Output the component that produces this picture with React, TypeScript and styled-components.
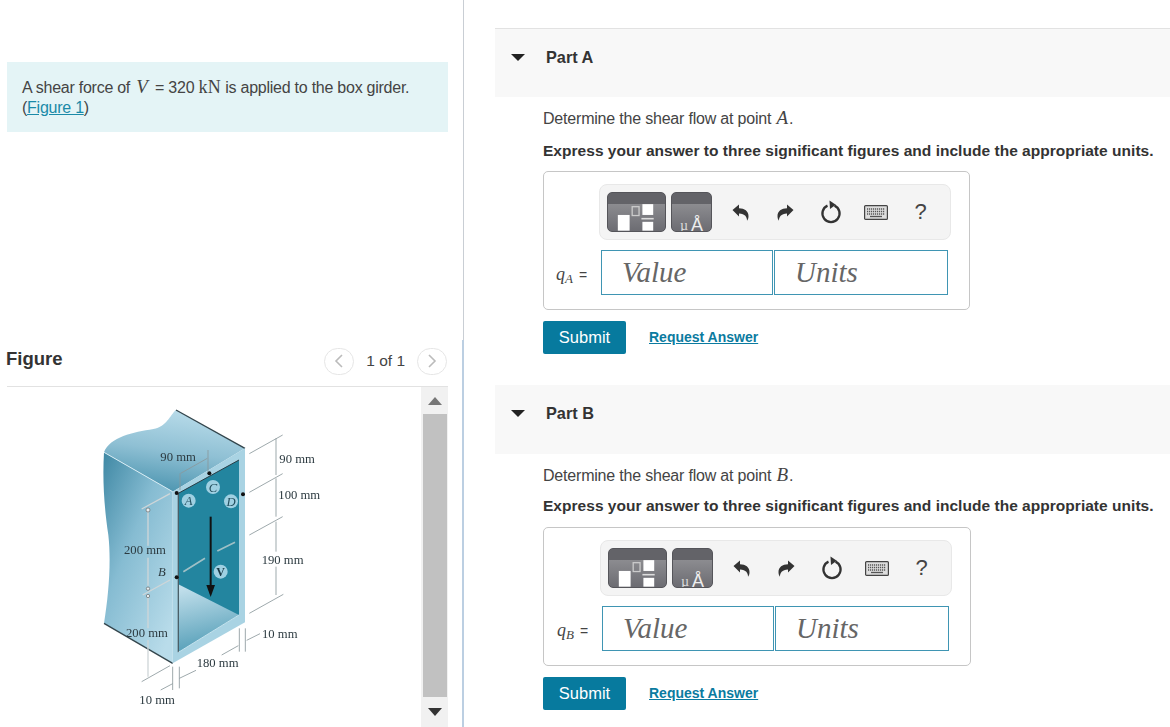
import React from "react";
import styled, { createGlobalStyle } from "styled-components";

const Global = createGlobalStyle`
  html, body { margin: 0; padding: 0; background: #fff; height: 727px; overflow: hidden; }
  body { font-family: "Liberation Sans", Arial, sans-serif; color: #333; }
`;

const Page = styled.div`
  display: flex;
  width: 1170px;
  height: 727px;
  overflow: hidden;
`;

const LeftColumn = styled.div`
  width: 462px;
  height: 727px;
  flex: none;
  padding: 62px 14px 0 7px;
  box-sizing: border-box;
  display: flex;
  flex-direction: column;
`;

const Divider = styled.div`
  width: 2px;
  height: 727px;
  flex: none;
  background:
    linear-gradient(#c9ced4, #c9ced4) right top / 1px 340px no-repeat,
    linear-gradient(#bccfe2, #bccfe2) left 340px / 2px 387px no-repeat;
`;

const Intro = styled.div`
  height: 70px;
  box-sizing: border-box;
  background: #e4f4f6;
  padding: 16px 15px 0 15px;
  font-size: 16px;
  line-height: 20px;
  letter-spacing: -0.25px;
  color: #444;
`;

const MathItalic = styled.span`
  font-family: "Liberation Serif", serif;
  font-style: italic;
  letter-spacing: 0;
  font-size: 19px;
  line-height: 0;
  margin: 0 3px 0 2px;
`;

const MathRoman = styled.span`
  font-family: "Liberation Serif", serif;
  letter-spacing: 0.3px;
  font-size: 18px;
  line-height: 0;
`;

const PromptPoint = styled.span`
  font-family: "Liberation Serif", serif;
  font-style: italic;
  letter-spacing: 0;
  font-size: 19px;
  line-height: 0;
  margin: 0 1px 0 1px;
`;

const FigureLink = styled.a`
  color: #1a8aa8;
  text-decoration: underline;
`;

const FigureHead = styled.div`
  margin-top: 208px;
  height: 46px;
  display: flex;
  align-items: center;
  justify-content: space-between;
  border-bottom: 1px solid #e2e2e2;
`;

const FigureTitle = styled.h2`
  margin: 0 0 8px -1px;
  font-size: 18.5px;
  font-weight: bold;
  color: #333;
`;

const Pager = styled.div`
  display: flex;
  align-items: center;
  gap: 12px;
  margin: 0 1px 4px 0;
  font-size: 15.5px;
  color: #444;
`;

const PagerButton = styled.span`
  width: 30px;
  height: 27px;
  border: 1px solid #e6e6e6;
  border-radius: 15px;
  box-sizing: border-box;
  display: flex;
  align-items: center;
  justify-content: center;
`;

const FigureBody = styled.div`
  display: flex;
  flex: 1;
  min-height: 0;
`;

const FigureCanvas = styled.div`
  width: 414px;
  padding: 8px 0 0 83px;
  box-sizing: border-box;
  svg { filter: blur(0.35px); }
`;

const ScrollBar = styled.div`
  width: 27px;
  display: flex;
  flex-direction: column;
  background: #f1f1f1;
`;

const ScrollButton = styled.div`
  height: ${(p: { $h: number }) => p.$h}px;
  display: flex;
  align-items: center;
  justify-content: center;
  flex: none;
`;

const ScrollThumb = styled.div`
  flex: 1;
  background: #c1c1c1;
  margin: 0 1px 0 2px;
`;

const RightColumn = styled.div`
  flex: 1;
  min-width: 0;
  padding: 28px 0 0 31px;
`;

const PartHeader = styled.div`
  height: 69px;
  box-sizing: border-box;
  background: #f8f8f8;
  border-top: ${(p: { $line?: boolean }) => (p.$line ? "1px solid #e2e2e2" : "none")};
  display: flex;
  align-items: flex-start;
  padding: 18px 0 0 16px;
`;

const Caret = styled.span`
  width: 0;
  height: 0;
  border-left: 7px solid transparent;
  border-right: 7px solid transparent;
  border-top: 7px solid #222;
  margin: 7px 21px 0 0;
`;

const PartTitle = styled.h3`
  margin: 0;
  font-size: 16.3px;
  line-height: 20px;
  font-weight: bold;
  color: #333;
`;

const PartBody = styled.div`
  padding: 11px 0 0 48px;
  height: ${(p: { $h: number }) => p.$h}px;
  box-sizing: border-box;
`;

const Prompt = styled.p`
  margin: 0;
  font-size: 16px;
  line-height: 21px;
  letter-spacing: -0.2px;
  color: #444;
`;

const Instruction = styled.p<{ $gap: number }>`
  margin: ${(p) => p.$gap}px 0 0;
  font-size: 15.5px;
  line-height: 21px;
  font-weight: bold;
  letter-spacing: 0.03px;
  color: #333;
  white-space: nowrap;
`;

const AnswerCard = styled.div<{ $gap: number; $inset: number }>`
  margin-top: ${(p) => p.$gap}px;
  width: ${(p) => 372 + p.$inset}px;
  height: 139px;
  box-sizing: border-box;
  border: 1px solid #c6c6c6;
  border-radius: 5px;
  padding: 12px 0 0 ${(p) => p.$inset}px;
`;

const Toolbar = styled.div`
  height: 56px;
  width: 352px;
  box-sizing: border-box;
  background: #f4f4f4;
  border: 1px solid #e8e8e8;
  border-radius: 8px;
  display: flex;
  align-items: center;
  padding: 0 0 0 7px;
  gap: 5px;
`;

const TemplateButton = styled.div<{ $w: number }>`
  width: ${(p) => p.$w}px;
  height: 40px;
  border-radius: 5px;
  border: 1px solid #55555a;
  box-sizing: border-box;
  background: linear-gradient(#636368 0 11px, #8c8c90 11px, #6c6c72 100%);
  overflow: hidden;
  flex: none;
  display: flex;
`;

const ToolIcons = styled.div`
  display: flex;
  align-items: center;
  margin-left: 1px;
`;

const ToolIcon = styled.span`
  width: 45px;
  display: flex;
  justify-content: center;
  align-items: center;
`;

const HelpMark = styled.span`
  font-size: 22px;
  color: #444;
  line-height: 1;
`;

const InputRow = styled.div`
  display: flex;
  align-items: center;
  margin-top: 10px;
  margin-left: -43px;
`;

const VarLabel = styled.div`
  width: 45px;
  flex: none;
  box-sizing: border-box;
  padding: 3px 0 0 0;
  font-size: 14px;
  color: #444;
  white-space: nowrap;
`;

const VarName = styled.span`
  font-family: "Liberation Serif", serif;
  font-style: italic;
  font-size: 18px;
`;

const VarSub = styled.sub`
  font-family: "Liberation Serif", serif;
  font-style: italic;
  font-size: 13px;
  line-height: 0;
  margin-right: 6px;
`;

const MathInput = styled.div<{ $w: number }>`
  height: 45px;
  width: ${(p) => p.$w}px;
  box-sizing: border-box;
  border: 1px solid #3f95b3;
  font-family: "Liberation Serif", serif;
  font-style: italic;
  font-size: 29px;
  line-height: 42px;
  color: #666;
  padding-left: 20px;
  flex: none;
  & + & { margin-left: 1px; }
`;

const Actions = styled.div`
  margin-top: 11px;
  display: flex;
  align-items: center;
  gap: 23px;
`;

const SubmitButton = styled.button`
  width: 83px;
  height: 33px;
  border: none;
  border-radius: 2px;
  background: #077a9e;
  color: #fff;
  font: 16.5px "Liberation Sans", Arial, sans-serif;
  padding: 0;
`;

const RequestLink = styled.a`
  color: #0b7ba0;
  font-size: 14px;
  font-weight: bold;
  text-decoration: underline;
  margin-bottom: 2px;
`;

const Chevron = ({ d }: { d: string }) => (
  <svg width="10" height="14" viewBox="0 0 10 14" fill="none" stroke="#bbb" strokeWidth="1.6">
    <path d={d} />
  </svg>
);

const Triangle = ({ up }: { up?: boolean }) => (
  <svg width="14" height="8" viewBox="0 0 14 8" fill={up ? "#777" : "#333"}>
    <path d={up ? "M0 8 L7 0 L14 8Z" : "M0 0 L7 8 L14 0Z"} />
  </svg>
);

const arrowPath = "M0.5 6 L7 0.5 V4.2 C12.5 4.2 16.5 7.2 16.5 12 C16.5 14 16 15.5 15 16.8 C15.2 13 13 9.6 7 9.4 V12.6 Z";

const Undo = () => (
  <svg width="17" height="17" viewBox="0 0 17 17" fill="#333">
    <path d={arrowPath} />
  </svg>
);
const Redo = () => (
  <svg width="17" height="17" viewBox="0 0 17 17" fill="#333" style={{ transform: "scaleX(-1)" }}>
    <path d={arrowPath} />
  </svg>
);
const Reset = () => (
  <svg width="22" height="24" viewBox="0 0 22 24" fill="none">
    <path d="M7.5 5.6 A8.6 8.6 0 1 0 14.5 5.6" stroke="#333" strokeWidth="2.3" />
    <path d="M9.5 0.5 L15.8 4.8 L10 9 Z" fill="#333" />
  </svg>
);
const Keyboard = () => (
  <svg width="24" height="15" viewBox="0 0 24 15">
    <rect x="0.6" y="0.6" width="22.8" height="13.8" rx="1" fill="#ddd" stroke="#444" strokeWidth="1.2" />
    <path d="M3 4h18M3 6.5h18M3 9h18" stroke="#555" strokeWidth="1.3" strokeDasharray="1.2 0.8" />
    <path d="M6 11.5h12" stroke="#555" strokeWidth="1.3" />
  </svg>
);

const TemplateGlyph = () => (
  <svg width="58" height="38" viewBox="0 0 58 38">
    <rect x="10" y="22" width="12" height="16" fill="#fff" />
    <rect x="24.6" y="13.6" width="7" height="9" fill="none" stroke="#ccc" strokeWidth="1.3" />
    <rect x="35" y="11" width="11" height="11" fill="#fff" />
    <rect x="34" y="25" width="12.5" height="1.6" fill="#ddd" />
    <rect x="35" y="29" width="11" height="9" fill="#fff" />
  </svg>
);

const UnitGlyph = () => (
  <svg width="39" height="38" viewBox="0 0 39 38">
    <text x="8" y="37" fontFamily="Liberation Serif, serif" fontSize="14" fill="#ddd">µ</text>
    <text x="19" y="38" fontFamily="Liberation Sans, sans-serif" fontSize="18" fill="#eee">Å</text>
  </svg>
);

const Dim = styled.text`
  font-family: "Liberation Serif", serif;
  font-size: 38px;
  fill: #2c3a40;
`;

const GirderFigure = () => (
  <svg width="250" height="332" viewBox="0 0 750 996">
    <defs>
      <linearGradient id="side" x1="0" y1="0" x2="0.8" y2="1">
        <stop offset="0" stopColor="#3f88a4" />
        <stop offset="0.45" stopColor="#86bcd2" />
        <stop offset="1" stopColor="#b9dcea" />
      </linearGradient>
      <linearGradient id="top" x1="0.6" y1="0" x2="0.35" y2="1">
        <stop offset="0" stopColor="#b9dcea" />
        <stop offset="0.5" stopColor="#8fc0d4" />
        <stop offset="1" stopColor="#4b94af" />
      </linearGradient>
      <linearGradient id="floor" x1="0.3" y1="0" x2="0.5" y2="1">
        <stop offset="0" stopColor="#c3e0ec" />
        <stop offset="1" stopColor="#4f9bb5" />
      </linearGradient>
    </defs>
    <path d="M42 172 C38 240 40 320 55 420 C64 500 56 600 42 685 L248 805 V290 Z" fill="url(#side)" />
    <path d="M42 172 C60 125 130 112 190 102 C232 94 238 62 258 45 L465 160 L248 290 Z" fill="url(#top)" />
    <path d="M42 172 L248 290" stroke="#d6ebf3" strokeWidth="3" />
    <path d="M258 45 L465 160" stroke="#33454c" strokeWidth="4" fill="none" />
    <path d="M42 685 L248 805" stroke="#33454c" strokeWidth="4" fill="none" />
    <path d="M248 290 L465 160 V682 L248 805 Z" fill="#a9d3e3" />
    <path d="M265 295 L447 195 V660 L265 772 Z" fill="#23859f" />
    <path d="M265 568 L447 660 L265 772 Z" fill="url(#floor)" />
    <path d="M265 295 L447 195" stroke="#2b3c44" strokeWidth="3" />
    <path d="M265 295 V772" stroke="#4a5f68" strokeWidth="4" />
    <path d="M265 772 L447 660" stroke="#c8e4ef" strokeWidth="3" />
    <path d="M280 530 L345 490 M382 468 L435 442" stroke="#9fc0c6" strokeWidth="5" />
    <g fill="#9fd0e2">
      <circle cx="296" cy="317" r="21" />
      <circle cx="369" cy="276" r="21" />
      <circle cx="423" cy="319" r="21" />
      <circle cx="392" cy="530" r="21" />
    </g>
    <g fontFamily="Liberation Serif, serif" fontStyle="italic" fontSize="38" fill="#244f5e" textAnchor="middle">
      <text x="296" y="331">A</text>
      <text x="369" y="290">C</text>
      <text x="423" y="333">D</text>
    </g>
    <text x="392" y="543" fontFamily="Liberation Serif, serif" fontWeight="bold" fontSize="36" fill="#1b3a46" textAnchor="middle">V</text>
    <path d="M362 365 V575" stroke="#111" strokeWidth="6" />
    <path d="M349 570 H375 L362 606 Z" fill="#111" />
    <g fill="#111">
      <circle cx="260" cy="294" r="6" />
      <circle cx="358" cy="235" r="6" />
      <circle cx="459" cy="298" r="6" />
      <circle cx="260" cy="547" r="6" />
    </g>
    <g stroke="#cfd6d8" strokeWidth="4" fill="none">
      <path d="M155 342 L240 296" />
      <path d="M174 345 V452" />
      <path d="M174 488 V572" />
      <path d="M158 600 L240 555" />
      <path d="M174 605 V700" />
      <path d="M174 735 V845" />
    </g>
    <g fill="#e8eef0" stroke="#666" strokeWidth="2">
      <circle cx="174" cy="345" r="6" />
      <circle cx="174" cy="581" r="5" />
      <circle cx="174" cy="603" r="5" />
    </g>
    <path d="M155 860 L240 812 M268 815 V880 M248 815 V885 M212 885 L248 866 M268 850 L318 826 M395 780 L445 752 M448 700 V770 M466 700 V770 M470 736 L510 716"
      stroke="#8a979b" strokeWidth="2.5" fill="none" />
    <path d="M478 176 L578 120 M478 292 L578 236 M478 420 L578 365 M478 655 L580 598 M558 130 V240 M558 250 V365 M558 380 V470 M558 515 V600 M270 235 V285 M354 165 V230 M272 235 L352 190"
      stroke="#8a979b" strokeWidth="2.5" fill="none" />
    <Dim x="211" y="199">90 mm</Dim>
    <Dim x="568" y="204">90 mm</Dim>
    <Dim x="565" y="313">100 mm</Dim>
    <Dim x="102" y="478">200 mm</Dim>
    <Dim x="515" y="506">190 mm</Dim>
    <text x="204" y="544" fontFamily="Liberation Serif, serif" fontStyle="italic" fontSize="38" fill="#2c3a40">B</text>
    <Dim x="108" y="727">200 mm</Dim>
    <Dim x="516" y="729">10 mm</Dim>
    <Dim x="320" y="816">180 mm</Dim>
    <Dim x="148" y="926">10 mm</Dim>
  </svg>
);

const Toolstrip = () => (
  <Toolbar>
    <TemplateButton $w={59}><TemplateGlyph /></TemplateButton>
    <TemplateButton $w={41}><UnitGlyph /></TemplateButton>
    <ToolIcons>
      <ToolIcon><Undo /></ToolIcon>
      <ToolIcon><Redo /></ToolIcon>
      <ToolIcon><Reset /></ToolIcon>
      <ToolIcon><Keyboard /></ToolIcon>
      <ToolIcon><HelpMark>?</HelpMark></ToolIcon>
    </ToolIcons>
  </Toolbar>
);

type PartProps = {
  name: string;
  point: string;
  sub: string;
  h: number;
  line?: boolean;
  instructionGap: number;
  cardGap: number;
  inset: number;
};

const Part = ({ name, point, sub, h, line, instructionGap, cardGap, inset }: PartProps) => (
  <section>
    <PartHeader $line={line}>
      <Caret />
      <PartTitle>{name}</PartTitle>
    </PartHeader>
    <PartBody $h={h}>
      <Prompt>
        Determine the shear flow at point <PromptPoint>{point}</PromptPoint>.
      </Prompt>
      <Instruction $gap={instructionGap}>
        Express your answer to three significant figures and include the appropriate units.
      </Instruction>
      <AnswerCard $gap={cardGap} $inset={inset}>
        <Toolstrip />
        <InputRow>
          <VarLabel>
            <VarName>q</VarName>
            <VarSub>{sub}</VarSub>=
          </VarLabel>
          <MathInput $w={172}>Value</MathInput>
          <MathInput $w={174}>Units</MathInput>
        </InputRow>
      </AnswerCard>
      <Actions>
        <SubmitButton>Submit</SubmitButton>
        <RequestLink>Request Answer</RequestLink>
      </Actions>
    </PartBody>
  </section>
);

export default function App() {
  return (
    <Page>
      <Global />
      <LeftColumn>
        <Intro>
          A shear force of <MathItalic>V</MathItalic> = 320 <MathRoman>kN</MathRoman> is applied to the box girder.
          <br />
          (<FigureLink>Figure 1</FigureLink>)
        </Intro>
        <FigureHead>
          <FigureTitle>Figure</FigureTitle>
          <Pager>
            <PagerButton><Chevron d="M8 1 L2 7 L8 13" /></PagerButton>
            <span>1 of 1</span>
            <PagerButton><Chevron d="M2 1 L8 7 L2 13" /></PagerButton>
          </Pager>
        </FigureHead>
        <FigureBody>
          <FigureCanvas><GirderFigure /></FigureCanvas>
          <ScrollBar>
            <ScrollButton $h={27}><Triangle up /></ScrollButton>
            <ScrollThumb />
            <ScrollButton $h={30}><Triangle /></ScrollButton>
          </ScrollBar>
        </FigureBody>
      </LeftColumn>
      <Divider />
      <RightColumn>
        <Part name="Part A" point="A" sub="A" h={288} line instructionGap={11} cardGap={10} inset={55} />
        <Part name="Part B" point="B" sub="B" h={300} instructionGap={9} cardGap={11} inset={56} />
      </RightColumn>
    </Page>
  );
}
